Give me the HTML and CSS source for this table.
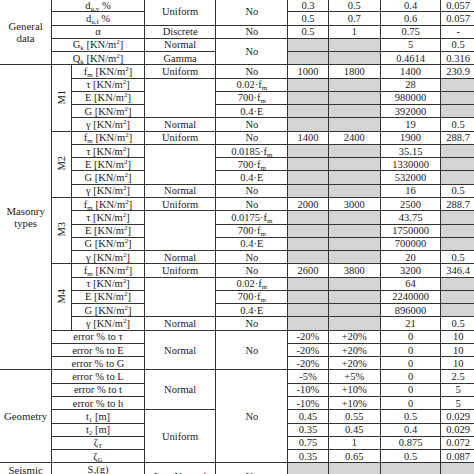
FILE: index.html
```html
<!DOCTYPE html>
<html>
<head>
<meta charset="utf-8">
<link rel="stylesheet" href="styles.css">
</head>
<body>
<div class="sheet">
<table class="t">
<colgroup>
<col class="c1"><col class="c2"><col class="c3"><col class="c4"><col class="c5"><col class="c6"><col class="c7"><col class="c8"><col class="c9">
</colgroup>
<tbody>
<tr><td rowspan="5" class="grp">General<br>data</td><td colspan="2">d<sub>u,v</sub> %</td><td rowspan="2">Uniform</td><td rowspan="2">No</td><td>0.3</td><td>0.5</td><td>0.4</td><td>0.057</td></tr>
<tr><td colspan="2">d<sub>u,f</sub> %</td><td>0.5</td><td>0.7</td><td>0.6</td><td>0.057</td></tr>
<tr><td colspan="2">α</td><td>Discrete</td><td>No</td><td>0.5</td><td>1</td><td>0.75</td><td>-</td></tr>
<tr><td colspan="2">G<sub>k</sub> [KN/m<sup>2</sup>]</td><td>Normal</td><td rowspan="2">No</td><td class="g"></td><td class="g"></td><td>5</td><td>0.5</td></tr>
<tr><td colspan="2">Q<sub>k</sub> [KN/m<sup>2</sup>]</td><td>Gamma</td><td class="g"></td><td class="g"></td><td>0.4614</td><td>0.316</td></tr>

<tr><td rowspan="23" class="grp">Masonry<br>types</td><td rowspan="5" class="m"><span>M1</span></td><td>f<sub>m</sub> [KN/m<sup>2</sup>]</td><td>Uniform</td><td>No</td><td>1000</td><td>1800</td><td>1400</td><td>230.9</td></tr>
<tr><td>τ [KN/m<sup>2</sup>]</td><td rowspan="3"></td><td>0.02·f<sub>m</sub></td><td class="g"></td><td class="g"></td><td>28</td><td class="g"></td></tr>
<tr><td>E [KN/m<sup>2</sup>]</td><td>700·f<sub>m</sub></td><td class="g"></td><td class="g"></td><td>980000</td><td class="g"></td></tr>
<tr><td>G [KN/m<sup>2</sup>]</td><td>0.4·E</td><td class="g"></td><td class="g"></td><td>392000</td><td class="g"></td></tr>
<tr><td>γ [KN/m<sup>2</sup>]</td><td>Normal</td><td>No</td><td class="g"></td><td class="g"></td><td>19</td><td>0.5</td></tr>

<tr><td rowspan="5" class="m"><span>M2</span></td><td>f<sub>m</sub> [KN/m<sup>2</sup>]</td><td>Uniform</td><td>No</td><td>1400</td><td>2400</td><td>1900</td><td>288.7</td></tr>
<tr><td>τ [KN/m<sup>2</sup>]</td><td rowspan="3"></td><td>0.0185·f<sub>m</sub></td><td class="g"></td><td class="g"></td><td>35.15</td><td class="g"></td></tr>
<tr><td>E [KN/m<sup>2</sup>]</td><td>700·f<sub>m</sub></td><td class="g"></td><td class="g"></td><td>1330000</td><td class="g"></td></tr>
<tr><td>G [KN/m<sup>2</sup>]</td><td>0.4·E</td><td class="g"></td><td class="g"></td><td>532000</td><td class="g"></td></tr>
<tr><td>γ [KN/m<sup>2</sup>]</td><td>Normal</td><td>No</td><td class="g"></td><td class="g"></td><td>16</td><td>0.5</td></tr>

<tr><td rowspan="5" class="m"><span>M3</span></td><td>f<sub>m</sub> [KN/m<sup>2</sup>]</td><td>Uniform</td><td>No</td><td>2000</td><td>3000</td><td>2500</td><td>288.7</td></tr>
<tr><td>τ [KN/m<sup>2</sup>]</td><td rowspan="3"></td><td>0.0175·f<sub>m</sub></td><td class="g"></td><td class="g"></td><td>43.75</td><td class="g"></td></tr>
<tr><td>E [KN/m<sup>2</sup>]</td><td>700·f<sub>m</sub></td><td class="g"></td><td class="g"></td><td>1750000</td><td class="g"></td></tr>
<tr><td>G [KN/m<sup>2</sup>]</td><td>0.4·E</td><td class="g"></td><td class="g"></td><td>700000</td><td class="g"></td></tr>
<tr><td>γ [KN/m<sup>2</sup>]</td><td>Normal</td><td>No</td><td class="g"></td><td class="g"></td><td>20</td><td>0.5</td></tr>

<tr><td rowspan="5" class="m"><span>M4</span></td><td>f<sub>m</sub> [KN/m<sup>2</sup>]</td><td>Uniform</td><td>No</td><td>2600</td><td>3800</td><td>3200</td><td>346.4</td></tr>
<tr><td>τ [KN/m<sup>2</sup>]</td><td rowspan="3"></td><td>0.02·f<sub>m</sub></td><td class="g"></td><td class="g"></td><td>64</td><td class="g"></td></tr>
<tr><td>E [KN/m<sup>2</sup>]</td><td>700·f<sub>m</sub></td><td class="g"></td><td class="g"></td><td>2240000</td><td class="g"></td></tr>
<tr><td>G [KN/m<sup>2</sup>]</td><td>0.4·E</td><td class="g"></td><td class="g"></td><td>896000</td><td class="g"></td></tr>
<tr><td>γ [KN/m<sup>2</sup>]</td><td>Normal</td><td>No</td><td class="g"></td><td class="g"></td><td>21</td><td>0.5</td></tr>

<tr><td colspan="2">error % to τ</td><td rowspan="3">Normal</td><td rowspan="3">No</td><td>-20%</td><td>+20%</td><td>0</td><td>10</td></tr>
<tr><td colspan="2">error % to E</td><td>-20%</td><td>+20%</td><td>0</td><td>10</td></tr>
<tr><td colspan="2">error % to G</td><td>-20%</td><td>+20%</td><td>0</td><td>10</td></tr>

<tr><td rowspan="7" class="grp">Geometry</td><td colspan="2">error % to L</td><td rowspan="3">Normal</td><td rowspan="7">No</td><td>-5%</td><td>+5%</td><td>0</td><td>2.5</td></tr>
<tr><td colspan="2">error % to t</td><td>-10%</td><td>+10%</td><td>0</td><td>5</td></tr>
<tr><td colspan="2">error % to h</td><td>-10%</td><td>+10%</td><td>0</td><td>5</td></tr>
<tr><td colspan="2">t<sub>1</sub> [m]</td><td rowspan="4">Uniform</td><td>0.45</td><td>0.55</td><td>0.5</td><td>0.029</td></tr>
<tr><td colspan="2">t<sub>2</sub> [m]</td><td>0.35</td><td>0.45</td><td>0.4</td><td>0.029</td></tr>
<tr><td colspan="2">ζ<sub>T</sub></td><td>0.75</td><td>1</td><td>0.875</td><td>0.072</td></tr>
<tr><td colspan="2">ζ<sub>G</sub></td><td>0.35</td><td>0.65</td><td>0.5</td><td>0.087</td></tr>

<tr><td rowspan="2" class="grp">Seismic<br>action</td><td colspan="2">S<sub>a</sub>(g)</td><td rowspan="2">Log-Normal</td><td rowspan="2">No</td><td class="g"></td><td class="g"></td><td class="g"></td><td class="g"></td></tr>
<tr><td colspan="2">T [s]</td><td class="g"></td><td class="g"></td><td class="g"></td><td class="g"></td></tr>
</tbody>
</table>
</div>
</body>
</html>
```
FILE: styles.css
```css
html, body {
  margin: 0;
  padding: 0;
  background: #fff;
}
.sheet {
  width: 474px;
  height: 474px;
  overflow: hidden;
}
.t {
  border-collapse: collapse;
  table-layout: fixed;
  width: 475px;
  margin-top: -2px;
  font-family: "Liberation Serif", "Times New Roman", serif;
  font-size: 10.5px;
  color: #222;
}
.c1 { width: 51.7px; }
.c2 { width: 20px; }
.c3 { width: 72.6px; }
.c4 { width: 71.7px; }
.c5 { width: 71.7px; }
.c6 { width: 40.6px; }
.c7 { width: 52px; }
.c8 { width: 60.7px; }
.c9 { width: 34.4px; }
.t tr { height: 13.27px; }
.t td {
  border: 1px solid #333;
  padding: 0;
  text-align: center;
  vertical-align: middle;
  line-height: 11px;
  white-space: nowrap;
  overflow: hidden;
}
.t td.grp {
  border-left: none;
  line-height: 12px;
  font-size: 10.8px;
}
.t td.g { background: #d4d4d4; }
.t sub, .t sup {
  font-size: 7px;
  line-height: 0;
}
.t sub { vertical-align: -1.5px; }
.t sup { vertical-align: 4px; }
.m span {
  display: inline-block;
  writing-mode: vertical-rl;
  transform: rotate(180deg);
  line-height: 12px;
}
```
